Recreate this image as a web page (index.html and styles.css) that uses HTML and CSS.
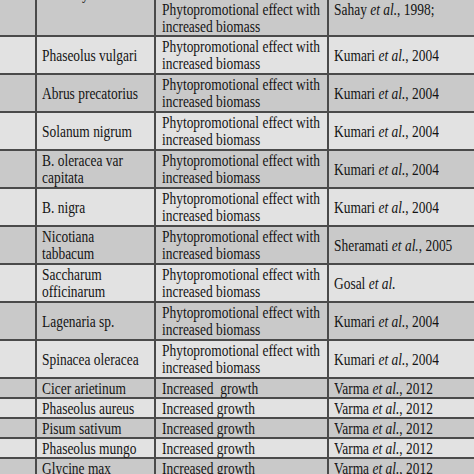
FILE: index.html
```html
<!DOCTYPE html>
<html>
<head>
<meta charset="utf-8">
<link rel="stylesheet" href="styles.css">
</head>
<body>
<div class="table">
  <div class="row dark first">
    <div class="cell"></div>
    <div class="cell cut"><span class="t">Zea mays</span></div>
    <div class="cell"><span class="t">Phytopromotional effect with<br>increased biomass</span></div>
    <div class="cell top"><span class="t">Sahay <i>et al.</i>, 1998;</span></div>
  </div>
  <div class="row light">
    <div class="cell"></div>
    <div class="cell"><span class="t">Phaseolus vulgari</span></div>
    <div class="cell"><span class="t">Phytopromotional effect with<br>increased biomass</span></div>
    <div class="cell"><span class="t">Kumari <i>et al.</i>, 2004</span></div>
  </div>
  <div class="row dark">
    <div class="cell"></div>
    <div class="cell"><span class="t">Abrus precatorius</span></div>
    <div class="cell"><span class="t">Phytopromotional effect with<br>increased biomass</span></div>
    <div class="cell"><span class="t">Kumari <i>et al.</i>, 2004</span></div>
  </div>
  <div class="row light">
    <div class="cell"></div>
    <div class="cell"><span class="t">Solanum nigrum</span></div>
    <div class="cell"><span class="t">Phytopromotional effect with<br>increased biomass</span></div>
    <div class="cell"><span class="t">Kumari <i>et al.</i>, 2004</span></div>
  </div>
  <div class="row dark">
    <div class="cell"></div>
    <div class="cell"><span class="t">B. oleracea var<br>capitata</span></div>
    <div class="cell"><span class="t">Phytopromotional effect with<br>increased biomass</span></div>
    <div class="cell"><span class="t">Kumari <i>et al.</i>, 2004</span></div>
  </div>
  <div class="row light">
    <div class="cell"></div>
    <div class="cell"><span class="t">B. nigra</span></div>
    <div class="cell"><span class="t">Phytopromotional effect with<br>increased biomass</span></div>
    <div class="cell"><span class="t">Kumari <i>et al.</i>, 2004</span></div>
  </div>
  <div class="row dark">
    <div class="cell"></div>
    <div class="cell"><span class="t">Nicotiana<br>tabbacum</span></div>
    <div class="cell"><span class="t">Phytopromotional effect with<br>increased biomass</span></div>
    <div class="cell"><span class="t">Sheramati <i>et al.</i>, 2005</span></div>
  </div>
  <div class="row light">
    <div class="cell"></div>
    <div class="cell"><span class="t">Saccharum<br>officinarum</span></div>
    <div class="cell"><span class="t">Phytopromotional effect with<br>increased biomass</span></div>
    <div class="cell"><span class="t">Gosal <i>et al.</i></span></div>
  </div>
  <div class="row dark">
    <div class="cell"></div>
    <div class="cell"><span class="t">Lagenaria sp.</span></div>
    <div class="cell"><span class="t">Phytopromotional effect with<br>increased biomass</span></div>
    <div class="cell"><span class="t">Kumari <i>et al.</i>, 2004</span></div>
  </div>
  <div class="row light">
    <div class="cell"></div>
    <div class="cell"><span class="t">Spinacea oleracea</span></div>
    <div class="cell"><span class="t">Phytopromotional effect with<br>increased biomass</span></div>
    <div class="cell"><span class="t">Kumari <i>et al.</i>, 2004</span></div>
  </div>
  <div class="row dark single">
    <div class="cell"></div>
    <div class="cell"><span class="t">Cicer arietinum</span></div>
    <div class="cell"><span class="t">Increased&nbsp; growth</span></div>
    <div class="cell"><span class="t">Varma <i>et al.</i>, 2012</span></div>
  </div>
  <div class="row light single">
    <div class="cell"></div>
    <div class="cell"><span class="t">Phaseolus aureus</span></div>
    <div class="cell"><span class="t">Increased growth</span></div>
    <div class="cell"><span class="t">Varma <i>et al.</i>, 2012</span></div>
  </div>
  <div class="row dark single">
    <div class="cell"></div>
    <div class="cell"><span class="t">Pisum sativum</span></div>
    <div class="cell"><span class="t">Increased growth</span></div>
    <div class="cell"><span class="t">Varma <i>et al.</i>, 2012</span></div>
  </div>
  <div class="row light single">
    <div class="cell"></div>
    <div class="cell"><span class="t">Phaseolus mungo</span></div>
    <div class="cell"><span class="t">Increased growth</span></div>
    <div class="cell"><span class="t">Varma <i>et al.</i>, 2012</span></div>
  </div>
  <div class="row dark single">
    <div class="cell"></div>
    <div class="cell"><span class="t">Glycine max</span></div>
    <div class="cell"><span class="t">Increased growth</span></div>
    <div class="cell"><span class="t">Varma <i>et al.</i>, 2012</span></div>
  </div>
</div>
</body>
</html>
```

FILE: styles.css
```css
html, body {
  margin: 0;
  padding: 0;
  background: #4d4d4d;
  overflow: hidden;
  height: 474px;
}

.table {
  display: flex;
  flex-direction: column;
  gap: 2px;
  background: #4a4a4a;
  font-family: "Liberation Serif", "Times New Roman", serif;
  font-size: 16px;
  line-height: 17px;
  color: #141414;
}

.row {
  display: grid;
  grid-template-columns: 35px 117px 171px 1fr;
  column-gap: 2px;
  height: 36px;
}

.row.first {
  height: 35px;
}

.row.single {
  height: 18px;
}

.cell {
  display: flex;
  align-items: center;
  padding-left: 5px;
  overflow: visible;
}

.cell:nth-child(3) {
  padding-left: 6px;
}

.row.dark .cell {
  background: #c9c9c9;
}

.row.light .cell {
  background: #e2e2e2;
}

.cell.top {
  align-items: flex-start;
  padding-top: 1px;
}

.cell.cut {
  align-items: flex-start;
}

.cell.cut .t {
  margin-top: -15px;
}

.t {
  display: inline-block;
  white-space: nowrap;
  transform: scaleX(0.84);
  transform-origin: left center;
}

.t i {
  font-style: italic;
}
```
